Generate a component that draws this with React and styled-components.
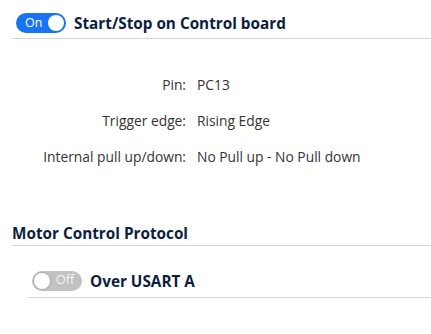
import React from 'react';
import styled, { createGlobalStyle } from 'styled-components';

const GlobalStyle = createGlobalStyle`
  body {
    margin: 0;
    background: #fff;
    font-family: 'Open Sans', 'Noto Sans', sans-serif;
  }
`

const FIELDS = [
  { label: 'Pin:', value: 'PC13' },
  { label: 'Trigger edge:', value: 'Rising Edge' },
  { label: 'Internal pull up/down:', value: 'No Pull up - No Pull down' },
]

const Toggle = ({ on }) => (
  <Switch on={on ? 1 : 0}>
    <SwitchLabel on={on ? 1 : 0}>{on ? 'On' : 'Off'}</SwitchLabel>
    <Knob on={on ? 1 : 0} />
  </Switch>
)

const App = () => {
  return (
    <Page>
      <GlobalStyle />
      <Header indent={4}>
        <Toggle on />
        <Title>Start/Stop on Control board</Title>
      </Header>

      <Fields>
        {FIELDS.map(({ label, value }) => (
          <Field key={label}>
            <Label>{label}</Label>
            <Value>{value}</Value>
          </Field>
        ))}
      </Fields>

      <SectionTitle>Motor Control Protocol</SectionTitle>

      <SubHeader>
        <Toggle />
        <Title>Over USART A</Title>
      </SubHeader>
    </Page>
  );
};

export default App;

const Page = styled.div`
  width: 431px;
  height: 334px;
  padding: 8px 0 0 12px;
  box-sizing: border-box;
  color: #333;
  overflow: hidden;
`

const Header = styled.div`
  display: flex;
  align-items: center;
  gap: 8px;
  height: 30px;
  padding-left: ${p => p.indent}px;
  border-bottom: 1px solid #d4d4d4;
`

const SubHeader = styled(Header)`
  margin-left: 16px;
  margin-top: 18px;
  height: 33px;
  padding-left: 4px;
`

const Switch = styled.div`
  position: relative;
  width: 50px;
  height: 20px;
  border-radius: 10px;
  background: ${p => (p.on ? '#1a73f0' : '#c2c2c2')};
  display: flex;
  align-items: center;
  box-sizing: border-box;
`

const SwitchLabel = styled.span`
  font-size: 12.5px;
  color: ${p => (p.on ? '#fff' : '#f6f6f6')};
  margin-left: ${p => (p.on ? '9px' : '24px')};
  line-height: 1;
`

const Knob = styled.span`
  position: absolute;
  top: 2px;
  ${p => (p.on ? 'right: 2px;' : 'left: 2px;')}
  width: 16px;
  height: 16px;
  border-radius: 50%;
  background: #fff;
  box-shadow: ${p => (p.on ? 'none' : '0 0 1px 1px rgba(0, 0, 0, 0.12)')};
`

const Title = styled.div`
  font-size: 15.3px;
  font-weight: 700;
  color: #0c1d3f;
`

const Fields = styled.div`
  display: grid;
  grid-template-columns: 174px auto;
  column-gap: 11px;
  row-gap: 18px;
  margin-top: 37px;
`

const Field = styled.div`
  display: contents;
`

const Label = styled.div`
  text-align: right;
  font-size: 13.8px;
  line-height: 18px;
  color: #333;
`

const Value = styled.div`
  font-size: 13.8px;
  line-height: 18px;
  color: #333;
`

const SectionTitle = styled.div`
  margin-top: 57px;
  padding-bottom: 2px;
  font-size: 15.3px;
  font-weight: 700;
  color: #0c1d3f;
  border-bottom: 1px solid #d4d4d4;
`
